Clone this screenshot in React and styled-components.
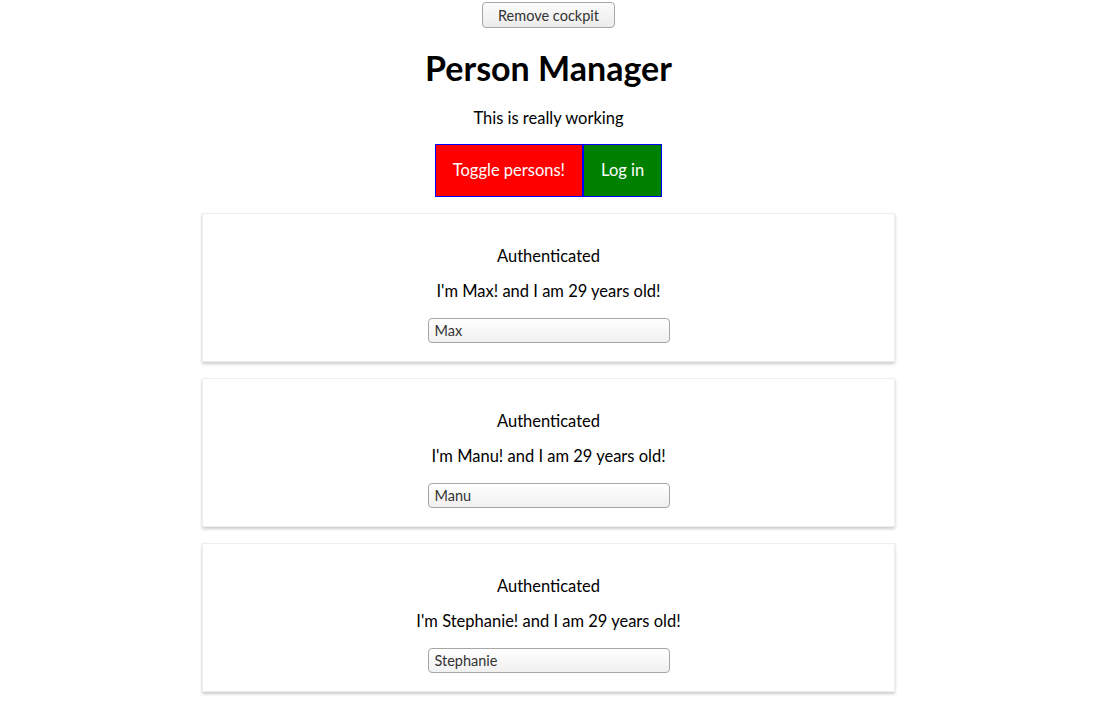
import React, { useState } from 'react'
import styled, { createGlobalStyle } from 'styled-components'

const GlobalStyle = createGlobalStyle`
  body {
    margin: 0;
    font-family: 'Lato', 'Noto Sans', sans-serif;
    font-size: 16.5px;
    color: #000;
    background: #fff;
  }
`

const Page = styled('div')`
  text-align: center;
  padding-top: 2px;
`

const CockpitButton = styled('button')`
  font-family: inherit;
  font-size: 14.5px;
  color: #333;
  height: 26px;
  padding: 0 15px;
  border: 1px solid #a6a6a6;
  border-radius: 4px;
  background: linear-gradient(#fbfbfb, #ececec);
  cursor: pointer;
`

const Title = styled('h1')`
  font-size: 34px;
  line-height: 37px;
  font-weight: 700;
  margin: 21px 0 22px;
`

const Lead = styled('p')`
  margin: 16px 0;
  line-height: 20px;
`

const Actions = styled('div')`
  display: flex;
  justify-content: center;
  margin-top: 16px;
`

const ActionButton = styled('button')`
  font-family: inherit;
  font-size: 16.5px;
  line-height: 19px;
  color: #fff;
  background: ${p => p.$bg};
  border: 1px solid blue;
  padding: 16px 17px;
  cursor: pointer;
`

const Card = styled('div')`
  width: 60%;
  margin: 16px auto;
  border: 1px solid #eee;
  box-shadow: 0 2px 3px #ccc;
  padding: 16px;
  text-align: center;
`

const Line = styled('p')`
  margin: 16px 0;
  line-height: 19px;
  padding-top: 1px;
  height: 18px;
`

const NameInput = styled('input')`
  display: block;
  font-family: inherit;
  font-size: 14.5px;
  color: #333;
  width: 242px;
  height: 25px;
  box-sizing: border-box;
  padding: 0 6px;
  margin: 18px auto 2px;
  border: 1px solid #a6a6a6;
  border-radius: 4px;
  background: linear-gradient(#ffffff, #f0f0f0);
  outline: none;
`

function Person({ name, age, onChange }) {
  return (
    <Card>
      <Line>Authenticated</Line>
      <Line>I'm {name}! and I am {age} years old!</Line>
      <NameInput type="text" value={name} onChange={onChange} />
    </Card>
  )
}

export default function App() {
  const [persons, setPersons] = useState([
    { id: 'a1', name: 'Max', age: 29 },
    { id: 'a2', name: 'Manu', age: 29 },
    { id: 'a3', name: 'Stephanie', age: 29 }
  ])

  const changeName = (id, value) =>
    setPersons(persons.map(p => (p.id === id ? { ...p, name: value } : p)))

  return (
    <>
      <GlobalStyle />
      <Page>
        <CockpitButton>Remove cockpit</CockpitButton>
        <Title>Person Manager</Title>
        <Lead>This is really working</Lead>
        <Actions>
          <ActionButton $bg="red">Toggle persons!</ActionButton>
          <ActionButton $bg="green">Log in</ActionButton>
        </Actions>
        {persons.map(p => (
          <Person
            key={p.id}
            name={p.name}
            age={p.age}
            onChange={e => changeName(p.id, e.target.value)}
          />
        ))}
      </Page>
    </>
  )
}
